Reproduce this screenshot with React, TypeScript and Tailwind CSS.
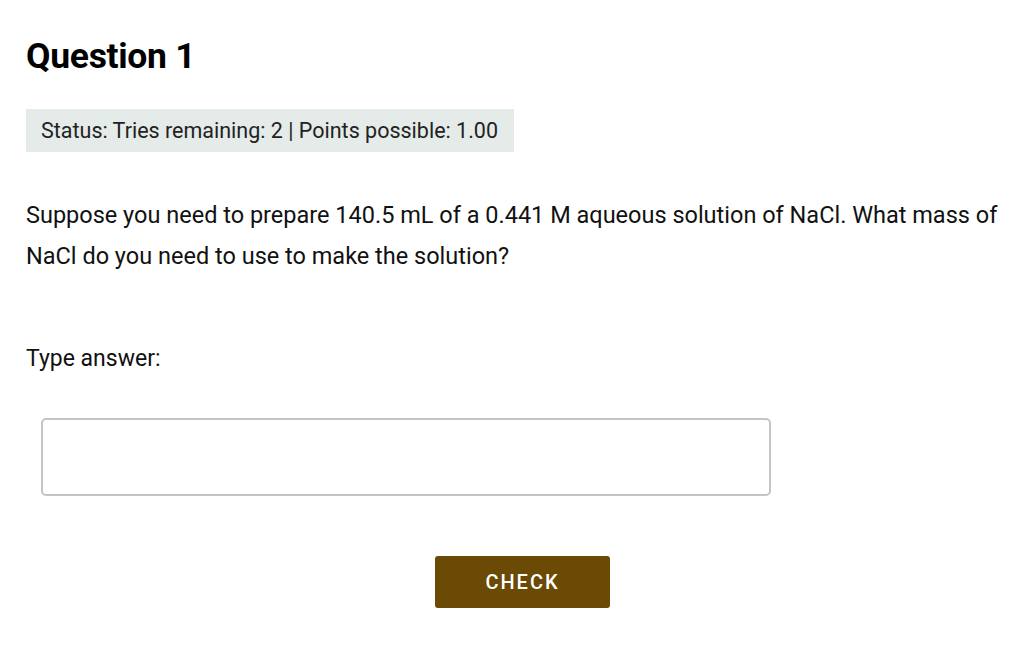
export default function App() {
  return (
    <div className="min-h-[652px] w-[1024px] bg-white text-black" style={{ fontFamily: "Roboto, 'Noto Sans', sans-serif" }}>
      <div className="pl-[26px] pr-[5px] pt-[34px]">
        <h1 className="text-[35.5px] font-bold leading-[44px] tracking-[-0.3px]">Question 1</h1>
        <div className="mt-[31px] inline-block h-[43px] w-[488px] bg-[#e5ebe8] pl-[15px] text-[21.5px] leading-[43px] text-[#222]">
          Status: Tries remaining: 2 | Points possible: 1.00
        </div>
        <p className="mt-[43px] text-[23.5px] leading-[41px] text-[#111]">
          Suppose you need to prepare 140.5 mL of a 0.441 M aqueous solution of NaCl. What mass of NaCl do you need to use to make the solution?
        </p>
        <p className="mt-[61px] text-[23px] leading-[41px] text-[#111]">Type answer:</p>
        <div className="mt-[39px] pl-[15px]">
          <input className="h-[78px] w-[730px] rounded-[5px] border-2 border-[#c4c4c4] bg-white px-3 outline-none" />
        </div>
        <div className="mt-[60px] flex justify-center">
          <button className="h-[52px] w-[175px] rounded-[3px] bg-[#6a4a04] text-[20px] font-medium tracking-[2px] text-white">
            CHECK
          </button>
        </div>
      </div>
    </div>
  );
}
